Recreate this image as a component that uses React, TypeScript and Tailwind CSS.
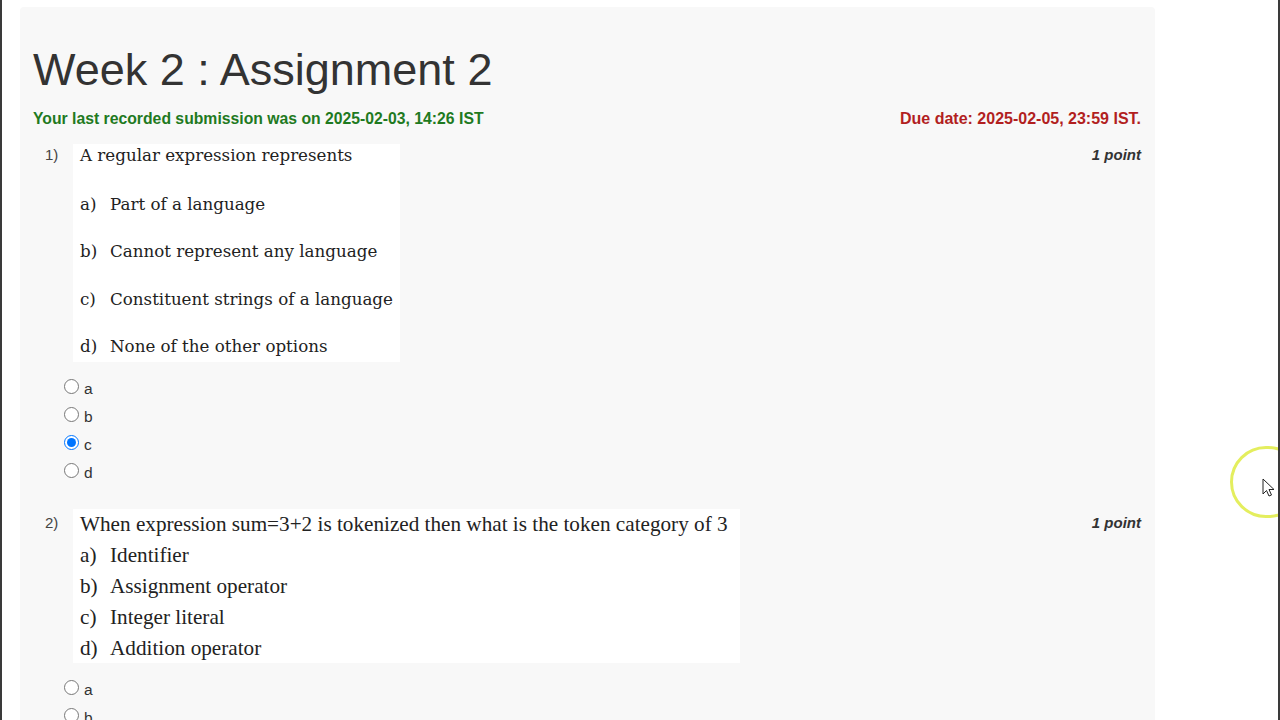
import React from 'react'

const Q1 = {
  num: '1)',
  text: 'A regular expression represents',
  options: ['Part of a language', 'Cannot represent any language', 'Constituent strings of a language', 'None of the other options'],
}

const Q2 = {
  num: '2)',
  text: 'When expression sum=3+2 is tokenized then what is the token category of 3',
  options: ['Identifier', 'Assignment operator', 'Integer literal', 'Addition operator'],
}

const LETTERS = ['a', 'b', 'c', 'd']

function Radios({ name, checked }: { name: string; checked?: string }) {
  return (
    <div className="flex flex-col gap-[9px] pl-[31px]">
      {LETTERS.map((l) => (
        <label key={l} className="flex items-center gap-[5px] h-[19px] text-[15.5px] text-[#333] leading-none">
          <input
            type="radio"
            name={name}
            defaultChecked={checked === l}
            className="m-0 w-[15px] h-[15px] accent-[#0075ff]"
          />
          <span className="mt-[4px]">{l}</span>
        </label>
      ))}
    </div>
  )
}

export default function App() {
  return (
    <div className="relative h-[720px] overflow-hidden bg-white border-l-2 border-r-2 border-[#3a3a3a] font-['Liberation_Sans',Arial,sans-serif]">
      <div className="ml-[18px] mt-[7px] w-[1135px] rounded-t-[4px] bg-[#f8f8f8] pl-[13px] pr-[14px] pt-[37px] pb-10">
        <h1 className="text-[45px] leading-[52px] text-[#333]">Week 2 : Assignment 2</h1>
        <div className="flex justify-between mt-[13px] text-[15.75px] font-bold leading-5">
          <span className="text-[#1f7a1f]">Your last recorded submission was on 2025-02-03, 14:26 IST</span>
          <span className="text-[#b21f1f] text-[16px]">Due date: 2025-02-05, 23:59 IST.</span>
        </div>

        {/* Question 1 */}
        <div className="flex items-start mt-[15px]">
          <span className="w-10 pl-3 pt-0 text-[15px] text-[#444]">1)</span>
          <div className="bg-white px-[7px] pb-[3px] w-[327px] font-['DejaVu_Serif',serif] text-[16.7px] text-[#222]">
            <div className="h-[22px] leading-[22px]">{Q1.text}</div>
            {Q1.options.map((o, i) => (
              <div key={o} className={`flex items-end leading-[24px] pb-[1px] ${i === 0 ? 'h-[50.5px]' : 'h-[47.5px]'}`}>
                <span className="w-[30px]">{LETTERS[i]})</span>
                <span>{o}</span>
              </div>
            ))}
          </div>
          <span className="ml-auto pt-0 text-[15px] font-bold italic text-[#333]">1 point</span>
        </div>
        <div className="mt-[15px]">
          <Radios name="q1" checked="c" />
        </div>

        {/* Question 2 */}
        <div className="flex items-start mt-[29px]">
          <span className="w-10 pl-3 pt-[3px] text-[15px] text-[#444]">2)</span>
          <div className="bg-white px-[7px] pt-[3px] pb-[3px] w-[667px] font-['Liberation_Serif',serif] text-[21.2px] text-[#222]">
            <div className="h-[24px] leading-[24px]">{Q2.text}</div>
            {Q2.options.map((o, i) => (
              <div key={o} className="flex h-[31px] items-end leading-[24px]">
                <span className="w-[30px]">{LETTERS[i]})</span>
                <span>{o}</span>
              </div>
            ))}
          </div>
          <span className="ml-auto pt-[3px] text-[15px] font-bold italic text-[#333]">1 point</span>
        </div>
        <div className="mt-[15px]">
          <Radios name="q2" />
        </div>
      </div>

      {/* cursor highlight */}
      <div className="absolute left-[1228px] top-[446px] w-[74px] h-[72px] rounded-full border-[3px] border-[#e4ee5e]" />
      <svg className="absolute left-[1260px] top-[478px]" width="14" height="20" viewBox="0 0 14 20">
        <path d="M1 1 L1 16 L4.5 12.5 L7 18 L9.5 17 L7 11.5 L12 11.5 Z" fill="white" stroke="#222" strokeWidth="1" />
      </svg>
    </div>
  )
}
